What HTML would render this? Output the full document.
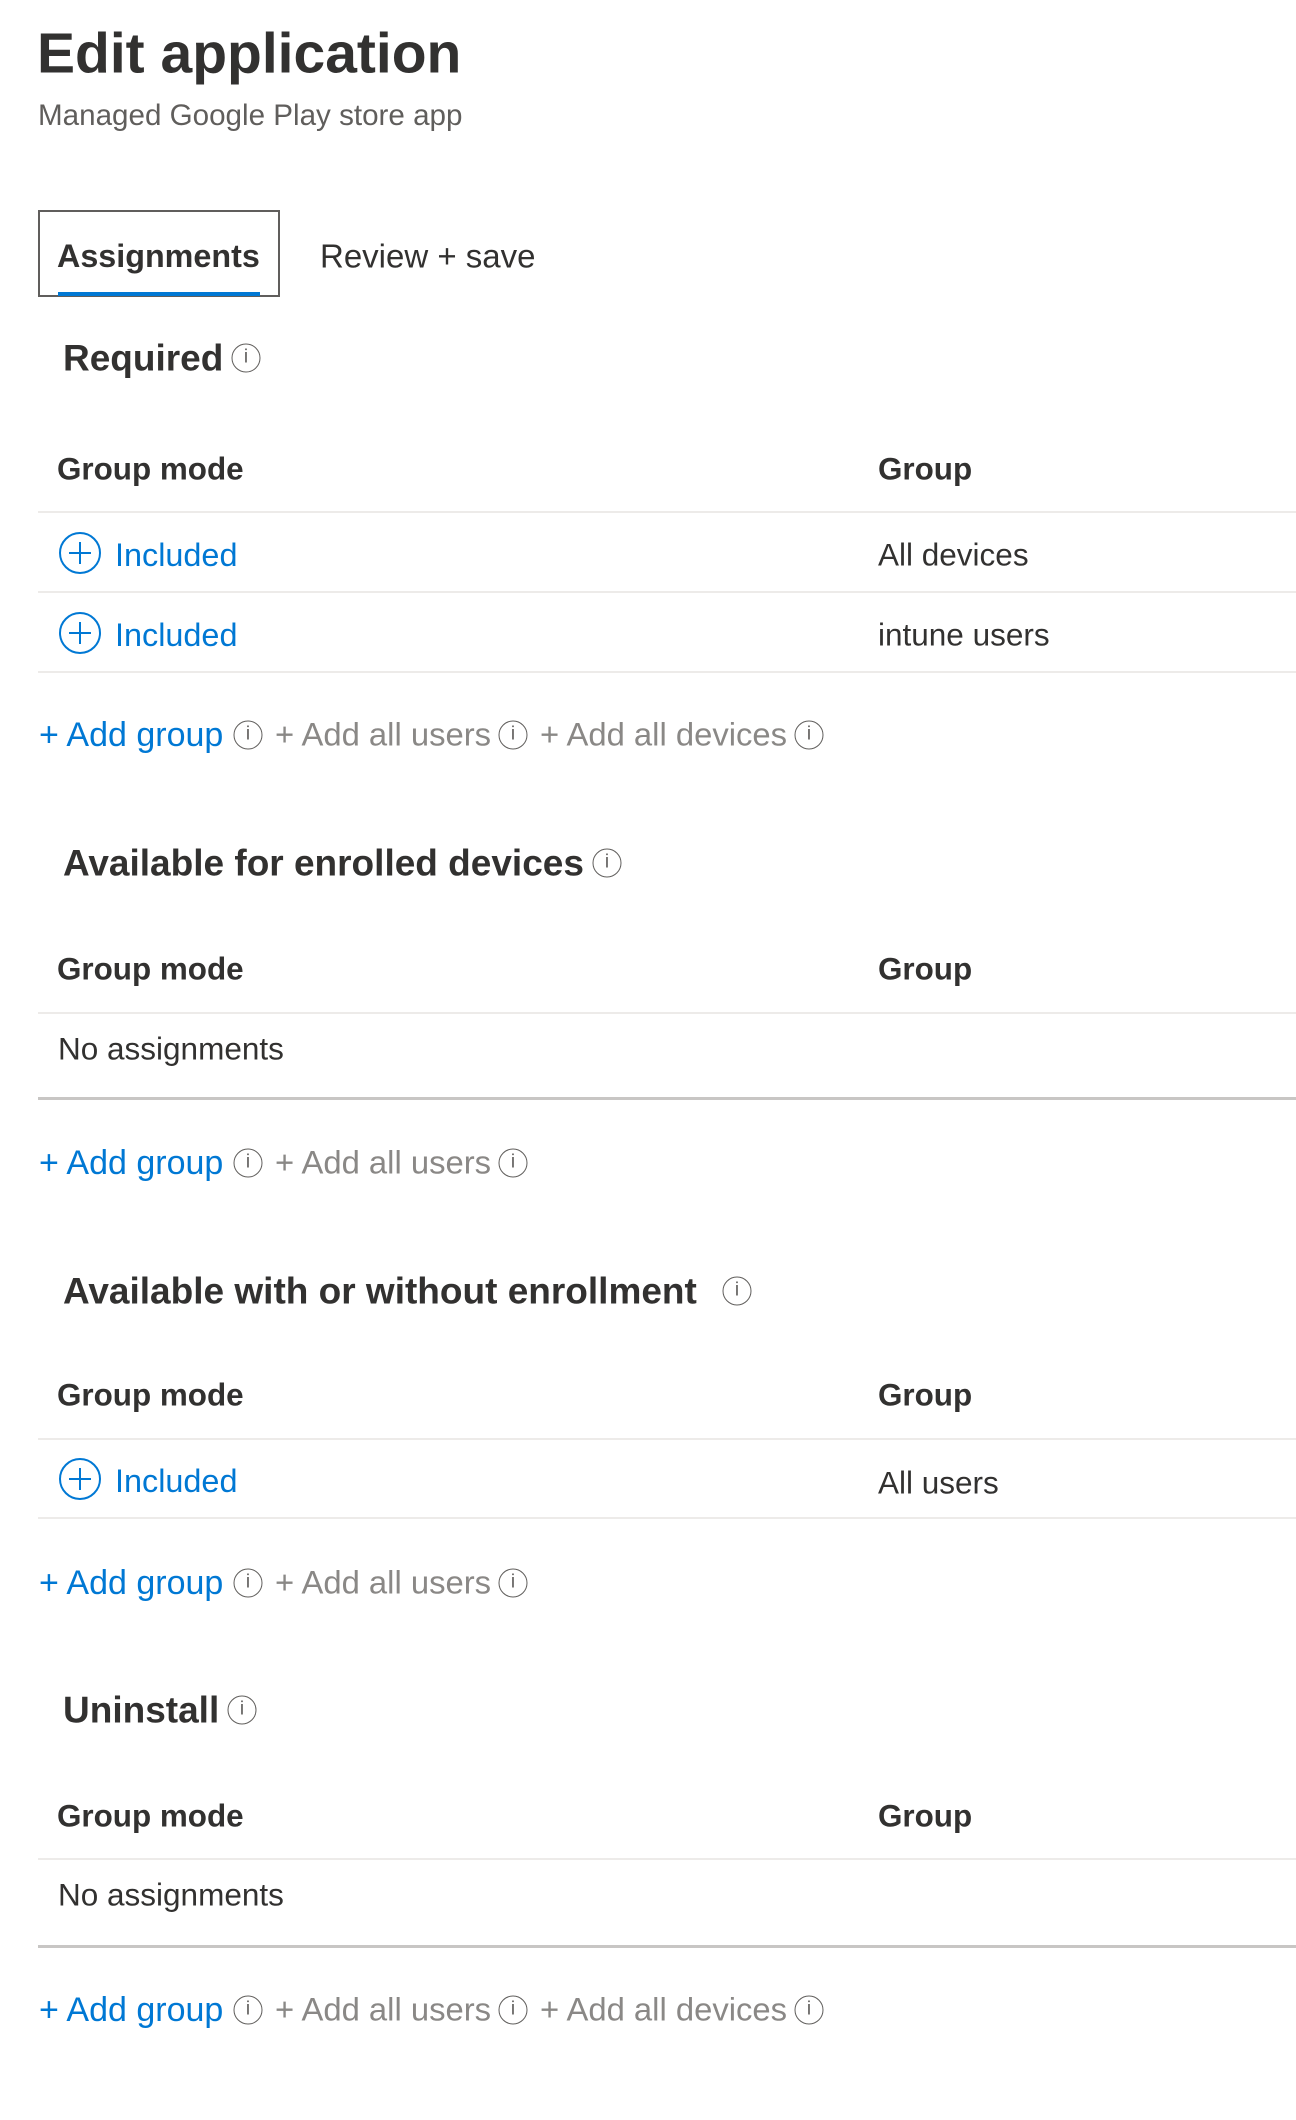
<!DOCTYPE html>
<html><head><meta charset="utf-8">
<style>
*{margin:0;padding:0;box-sizing:border-box}
body{width:1296px;height:2120px;background:#fff;font-family:"Liberation Sans",sans-serif;color:#323130;position:relative;overflow:hidden}
.a{position:absolute;white-space:nowrap;line-height:1}
.t{transform:translateY(-50%)}
.h1{font-size:57px;font-weight:700;left:37px;top:54px}
.sub{font-size:29.6px;color:#605e5c;left:38px;top:116px}
.tab{position:absolute;left:38px;top:210px;width:242px;height:87px;border:2px solid #605e5c}
.ul{position:absolute;left:58px;top:292px;width:202px;height:4px;background:#0078d4}
.tabt{font-size:32.3px;font-weight:700;left:57px;top:256px;color:#323130}
.rev{font-size:33px;left:320px;top:256px}
.sec{font-size:37px;font-weight:700;left:63px}
.hd{font-size:31.4px;font-weight:700;color:#323130}
.cell{font-size:31.5px}
.inc{font-size:32.4px}
.blue{color:#0078d4}
.gray{color:#8a8886}
.line{position:absolute;left:38px;width:1258px;height:2px;background:#edebe9}
.dline{position:absolute;left:38px;width:1258px;height:3px;background:#c8c6c4}
.plus{position:absolute;width:42px;height:42px;border:2.5px solid #0078d4;border-radius:50%;transform:translate(-50%,-50%)}
.plus:before{content:"";position:absolute;left:8px;right:8px;top:50%;height:2.5px;margin-top:-1.25px;background:#0078d4}
.plus:after{content:"";position:absolute;top:8px;bottom:8px;left:50%;width:2.5px;margin-left:-1.25px;background:#0078d4}
.info{position:absolute;border:1.8px solid #605e5c;border-radius:50%;transform:translate(-50%,-50%);font-family:"Liberation Sans",sans-serif;color:#605e5c;text-align:center}
.i1,.i2{width:29px;height:29px;font-size:19px;line-height:26px}
.addb{font-size:34px}
.add{font-size:32.8px}
</style></head><body>
<div class="a t h1">Edit application</div>
<div class="a t sub">Managed Google Play store app</div>
<div class="tab"></div><div class="ul"></div>
<div class="a t tabt">Assignments</div>
<div class="a t rev">Review + save</div>

<div class="a t sec" style="top:358px">Required</div>
<div class="info i1" style="left:246px;top:358px">i</div>
<div class="a t hd" style="left:57px;top:469px">Group mode</div>
<div class="a t hd" style="left:878px;top:469px">Group</div>
<div class="line" style="top:511px"></div>
<div class="plus" style="left:80px;top:553px"></div>
<div class="a t inc blue" style="left:115px;top:555px">Included</div>
<div class="a t cell" style="left:878px;top:555px">All devices</div>
<div class="line" style="top:591px"></div>
<div class="plus" style="left:80px;top:633px"></div>
<div class="a t inc blue" style="left:115px;top:635px">Included</div>
<div class="a t cell" style="left:878px;top:635px">intune users</div>
<div class="line" style="top:671px"></div>
<div class="a t addb blue" style="left:39px;top:735px">+ Add group</div>
<div class="info i2" style="left:248px;top:735px">i</div>
<div class="a t add gray" style="left:275px;top:735px">+ Add all users</div>
<div class="info i2" style="left:513px;top:735px">i</div>
<div class="a t add gray" style="left:540px;top:735px">+ Add all devices</div>
<div class="info i2" style="left:809px;top:735px">i</div>

<div class="a t sec" style="top:863px">Available for enrolled devices</div>
<div class="info i1" style="left:607px;top:863px">i</div>
<div class="a t hd" style="left:57px;top:969px">Group mode</div>
<div class="a t hd" style="left:878px;top:969px">Group</div>
<div class="line" style="top:1012px"></div>
<div class="a t cell" style="left:58px;top:1049px">No assignments</div>
<div class="dline" style="top:1097px"></div>
<div class="a t addb blue" style="left:39px;top:1163px">+ Add group</div>
<div class="info i2" style="left:248px;top:1163px">i</div>
<div class="a t add gray" style="left:275px;top:1163px">+ Add all users</div>
<div class="info i2" style="left:513px;top:1163px">i</div>

<div class="a t sec" style="top:1291px">Available with or without enrollment</div>
<div class="info i1" style="left:737px;top:1291px">i</div>
<div class="a t hd" style="left:57px;top:1395px">Group mode</div>
<div class="a t hd" style="left:878px;top:1395px">Group</div>
<div class="line" style="top:1438px"></div>
<div class="plus" style="left:80px;top:1479px"></div>
<div class="a t inc blue" style="left:115px;top:1481px">Included</div>
<div class="a t cell" style="left:878px;top:1483px">All users</div>
<div class="line" style="top:1517px"></div>
<div class="a t addb blue" style="left:39px;top:1583px">+ Add group</div>
<div class="info i2" style="left:248px;top:1583px">i</div>
<div class="a t add gray" style="left:275px;top:1583px">+ Add all users</div>
<div class="info i2" style="left:513px;top:1583px">i</div>

<div class="a t sec" style="top:1710px">Uninstall</div>
<div class="info i1" style="left:242px;top:1710px">i</div>
<div class="a t hd" style="left:57px;top:1816px">Group mode</div>
<div class="a t hd" style="left:878px;top:1816px">Group</div>
<div class="line" style="top:1858px"></div>
<div class="a t cell" style="left:58px;top:1895px">No assignments</div>
<div class="dline" style="top:1945px"></div>
<div class="a t addb blue" style="left:39px;top:2010px">+ Add group</div>
<div class="info i2" style="left:248px;top:2010px">i</div>
<div class="a t add gray" style="left:275px;top:2010px">+ Add all users</div>
<div class="info i2" style="left:513px;top:2010px">i</div>
<div class="a t add gray" style="left:540px;top:2010px">+ Add all devices</div>
<div class="info i2" style="left:809px;top:2010px">i</div>
</body></html>
